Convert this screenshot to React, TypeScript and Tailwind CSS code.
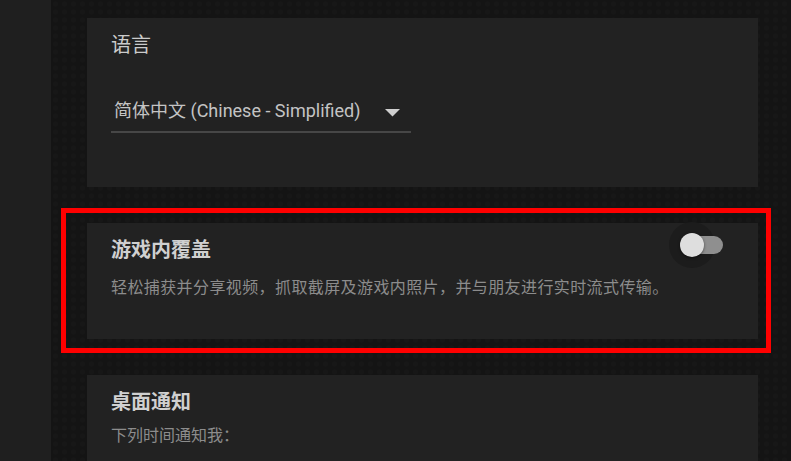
import { useState } from "react";

const fontStack = "font-['Roboto','Noto_Sans_CJK_SC',sans-serif]";

function Toggle() {
  const [on, setOn] = useState(false);
  return (
    <button
      type="button"
      onClick={() => setOn(!on)}
      aria-pressed={on}
      className="relative h-[24px] w-[43px] shrink-0 -translate-y-[5px]"
    >
      <span className="absolute left-[-11px] top-[-11px] h-[46px] w-[46px] rounded-full bg-[#1c1c1c]" />
      <span className="absolute left-[3px] top-[3px] h-[18px] w-[40px] rounded-full bg-[#8f8f8f]" />
      <span className="absolute left-0 top-0 h-[24px] w-[24px] rounded-full bg-[#dedede] shadow-[0_1px_3px_rgba(0,0,0,0.5)]" />
    </button>
  );
}

export default function App() {
  return (
    <div className={`flex h-[461px] w-[791px] overflow-hidden bg-[#141414] ${fontStack}`}>
      <div className="w-[51px] shrink-0 bg-[#1f1f1f]" />

      <main className="flex flex-1 flex-col gap-[36px] bg-[radial-gradient(circle,#171717_40%,transparent_46%)] bg-[length:9px_8px] pl-[36px] pr-[33px] pt-[18px]">
        <section className="h-[169px] shrink-0 bg-[#222222] pl-[24px] pr-[35px] pt-[13px]">
          <h2 className="text-[20px] leading-[28px] text-[#cbcbcb]">语言</h2>
          <div className="mt-[40px] flex w-[300px] items-center justify-between border-b-2 border-[#474747] pb-[8px] pl-[3px]">
            <span className="text-[18px] leading-[24px] text-[#c4c4c4]">
              简体中文 (Chinese - Simplified)
            </span>
            <svg width="15" height="8" viewBox="0 0 15 8" className="mr-[11px] mt-[3px]">
              <path d="M0 0h15L7.5 7.5z" fill="#cfcfcf" />
            </svg>
          </div>
        </section>

        <div className="relative shrink-0">
          <section className="h-[116px] bg-[#222222] pl-[24px] pr-[35px] pt-[13px]">
            <div className="flex items-center justify-between">
              <h2 className="text-[20px] font-bold leading-[28px] text-[#d0d0d0]">游戏内覆盖</h2>
              <Toggle />
            </div>
            <p className="mt-[12px] text-[16px] leading-[24px] tracking-[0.4px] text-[#8c8c8c]">
              轻松捕获并分享视频，抓取截屏及游戏内照片，并与朋友进行实时流式传输。
            </p>
          </section>
          <div className="pointer-events-none absolute -bottom-[14px] -left-[26px] -right-[13px] -top-[15px] border-[5px] border-[#ff0000]" />
        </div>

        <section className="h-[150px] shrink-0 bg-[#222222] pl-[24px] pr-[35px] pt-[13px]">
          <h2 className="text-[20px] font-bold leading-[28px] text-[#d0d0d0]">桌面通知</h2>
          <p className="mt-[8px] text-[16px] leading-[24px] text-[#8c8c8c]">下列时间通知我：</p>
        </section>
      </main>
    </div>
  );
}
